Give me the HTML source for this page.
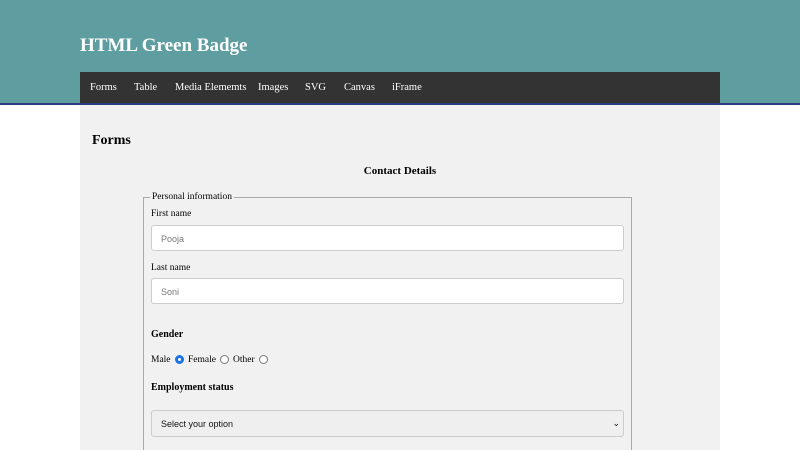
<!DOCTYPE html>
<html style="overflow:hidden;height:450px"><head><style>
*{margin:0;padding:0;box-sizing:border-box}
body{width:800px;height:450px;overflow:hidden;background:#fff;font-family:"Liberation Serif",serif;position:relative}
.a{position:absolute}
.hdr{left:0;top:0;width:800px;height:103px;background:#5f9ea0}
.line{left:0;top:103px;width:800px;height:2px;background:#2e3a80}
h1{position:absolute;left:80px;top:35px;font-size:19px;color:#fff;font-weight:bold}
.nav{left:80px;top:72px;width:640px;height:31px;background:#333}
.nav span{position:absolute;top:10px;color:#fff;font-size:10.5px}
.main{left:80px;top:105px;width:640px;height:345px;background:#f1f1f1}
.fs{left:143px;top:197px;width:489px;height:270px;border:1px solid #aaa}
.leg{left:150px;top:191px;background:#f1f1f1;padding:0 2px;font-size:9.5px}
.lbl{font-size:9.5px}
.inp{left:151px;width:473px;height:26px;background:#fff;border:1px solid #ccc;border-radius:3px;font-family:"Liberation Sans",sans-serif;font-size:9px;color:#777;padding:8px 9px}
.rad{width:9px;height:9px;border:1px solid #777;border-radius:50%;background:#fff;top:355px}
</style></head><body>
<div class="a hdr"></div><div class="a line"></div>
<h1>HTML Green Badge</h1>
<div class="a nav">
<span style="left:10px">Forms</span><span style="left:54px">Table</span><span style="left:95px">Media Elememts</span><span style="left:178px">Images</span><span style="left:225px">SVG</span><span style="left:264px">Canvas</span><span style="left:312px">iFrame</span>
</div>
<div class="a main"></div>
<div class="a" style="left:92px;top:133px;font-size:14px;font-weight:bold">Forms</div>
<div class="a" style="left:0;width:800px;text-align:center;top:165px;font-size:11px;font-weight:bold">Contact Details</div>
<div class="a fs"></div>
<div class="a leg" style="top:192px">Personal information</div>
<div class="a lbl" style="left:151px;top:209px">First name</div>
<div class="a inp" style="top:225px">Pooja</div>
<div class="a lbl" style="left:151px;top:263px">Last name</div>
<div class="a inp" style="top:278px">Soni</div>
<div class="a" style="left:151px;top:329px;font-size:10px;font-weight:bold">Gender</div>
<div class="a lbl" style="left:151px;top:355px">Male</div>
<div class="a rad" style="left:175px;border:3px solid #1a73e8"></div>
<div class="a lbl" style="left:188px;top:355px">Female</div>
<div class="a rad" style="left:220px"></div>
<div class="a lbl" style="left:233px;top:355px">Other</div>
<div class="a rad" style="left:259px"></div>
<div class="a" style="left:151px;top:382px;font-size:10px;font-weight:bold">Employment status</div>
<div class="a inp" style="top:410px;background:#efefef;color:#111;font-size:9px;height:27px">Select your option<span style="position:absolute;right:3px;top:7px;font-size:9px">&#8964;</span></div>
</body></html>
